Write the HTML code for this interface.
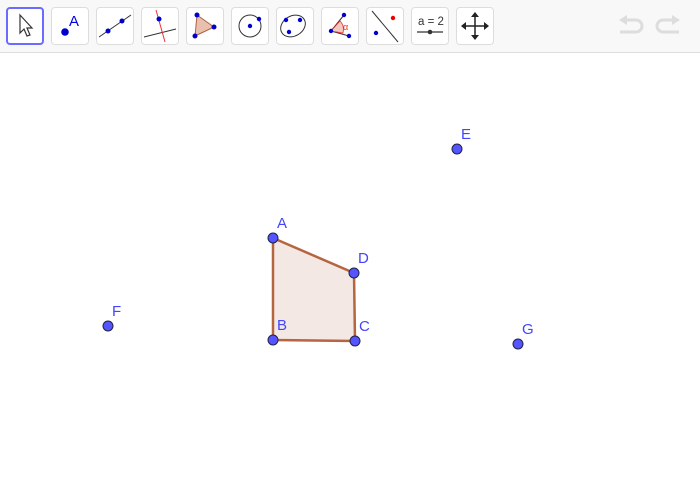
<!DOCTYPE html>
<html><head><style>
body{margin:0;width:700px;height:500px;overflow:hidden;background:#fff;font-family:"Liberation Sans",sans-serif}
#tb{position:absolute;left:0;top:0;width:700px;height:52px;background:#f8f8f8;border-bottom:1px solid #ddd}
.b{position:absolute;top:7px;width:38px;height:38px;background:#fff;border:1px solid #ddd;border-radius:4px;box-sizing:border-box}
.b.s{border:2px solid #6b6bff}
</style></head><body>
<div id="tb">
<div class="b s" style="left:6px"></div>
<div class="b" style="left:51px"></div>
<div class="b" style="left:96px"></div>
<div class="b" style="left:141px"></div>
<div class="b" style="left:186px"></div>
<div class="b" style="left:231px"></div>
<div class="b" style="left:276px"></div>
<div class="b" style="left:321px"></div>
<div class="b" style="left:366px"></div>
<div class="b" style="left:411px"></div>
<div class="b" style="left:456px"></div>
</div>
<svg width="700" height="500" style="position:absolute;left:0;top:0" font-family="Liberation Sans, sans-serif">
<path d="M20 15 L20 33 L24 29 L27 36 L30 35 L27 28 L32 28 Z" fill="#fff" stroke="#333" stroke-width="1.2"/>
<circle cx="65" cy="32" r="3.8" fill="#0000cc"/><text x="69" y="26" font-size="15" fill="#0000ee">A</text>
<line x1="99" y1="37" x2="131" y2="15" stroke="#333"/><circle cx="108" cy="31" r="2.5" fill="#0000cc"/><circle cx="122" cy="21" r="2.5" fill="#0000cc"/>
<line x1="144" y1="37" x2="176" y2="29" stroke="#333"/><line x1="156" y1="10" x2="165" y2="42" stroke="#e33"/><circle cx="159" cy="19" r="2.5" fill="#0000cc"/>
<path d="M197 15 L214 27 L195 36 Z" fill="#e9bfae" stroke="#b06040"/><circle cx="197" cy="15" r="2.5" fill="#0000cc"/><circle cx="214" cy="27" r="2.5" fill="#0000cc"/><circle cx="195" cy="36" r="2.5" fill="#0000cc"/>
<circle cx="250" cy="26" r="11" fill="none" stroke="#333"/><circle cx="250" cy="26" r="2.2" fill="#0000cc"/><circle cx="259" cy="19" r="2.2" fill="#0000cc"/>
<ellipse cx="293" cy="26" rx="13" ry="10" transform="rotate(-30 293 26)" fill="none" stroke="#333"/><circle cx="286" cy="20" r="2.2" fill="#0000cc"/><circle cx="300" cy="20" r="2.2" fill="#0000cc"/><circle cx="289" cy="32" r="2.2" fill="#0000cc"/>
<path d="M331 31 L344 15 M331 31 L349 36" stroke="#333" fill="none"/><path d="M331 31 L340 21 A12 12 0 0 1 343 33 Z" fill="#f3c9c0" stroke="#e33" stroke-width=".8"/><circle cx="331" cy="31" r="2.2" fill="#0000cc"/><circle cx="344" cy="15" r="2.2" fill="#0000cc"/><circle cx="349" cy="36" r="2.2" fill="#0000cc"/><text x="343" y="30" font-size="9" fill="#e33">α</text>
<line x1="372" y1="11" x2="398" y2="42" stroke="#333"/><circle cx="393" cy="18" r="2.2" fill="#e00"/><circle cx="376" cy="33" r="2.2" fill="#0000cc"/>
<text x="418" y="25" font-size="11.5" fill="#333">a = 2</text><line x1="417" y1="32" x2="443" y2="32" stroke="#555" stroke-width="1.5"/><circle cx="430" cy="32" r="2.3" fill="#333"/>
<path d="M475 14 L475 38 M463 26 L487 26" stroke="#222" stroke-width="1.5"/><path d="M475 12 L471 17 L479 17Z M475 40 L471 35 L479 35Z M461 26 L466 22 L466 30Z M489 26 L484 22 L484 30Z" fill="#222"/>
<path d="M619 20 L627 15 L627 25 Z" fill="#ddd"/><path d="M624 20 L636 20 A6 6 0 0 1 636 32 L620 32" fill="none" stroke="#ddd" stroke-width="3"/>
<path d="M680 20 L672 15 L672 25 Z" fill="#ddd"/><path d="M675 20 L663 20 A6 6 0 0 0 663 32 L679 32" fill="none" stroke="#ddd" stroke-width="3"/>
<path d="M273 238 L354 273 L355 341 L273 340 Z" fill="#f3e8e3" stroke="#b5653f" stroke-width="2.5" stroke-linejoin="round"/>
<g fill="#5555ff" stroke="#222244" stroke-width="1">
<circle cx="273" cy="238" r="5"/><circle cx="273" cy="340" r="5"/><circle cx="355" cy="341" r="5"/><circle cx="354" cy="273" r="5"/>
<circle cx="457" cy="149" r="5"/><circle cx="108" cy="326" r="5"/><circle cx="518" cy="344" r="5"/>
</g>
<g fill="#4444ff" font-size="15">
<text x="277" y="228">A</text><text x="277" y="330">B</text><text x="359" y="331">C</text><text x="358" y="263">D</text>
<text x="461" y="139">E</text><text x="112" y="316">F</text><text x="522" y="334">G</text>
</g>
</svg>
</body></html>
